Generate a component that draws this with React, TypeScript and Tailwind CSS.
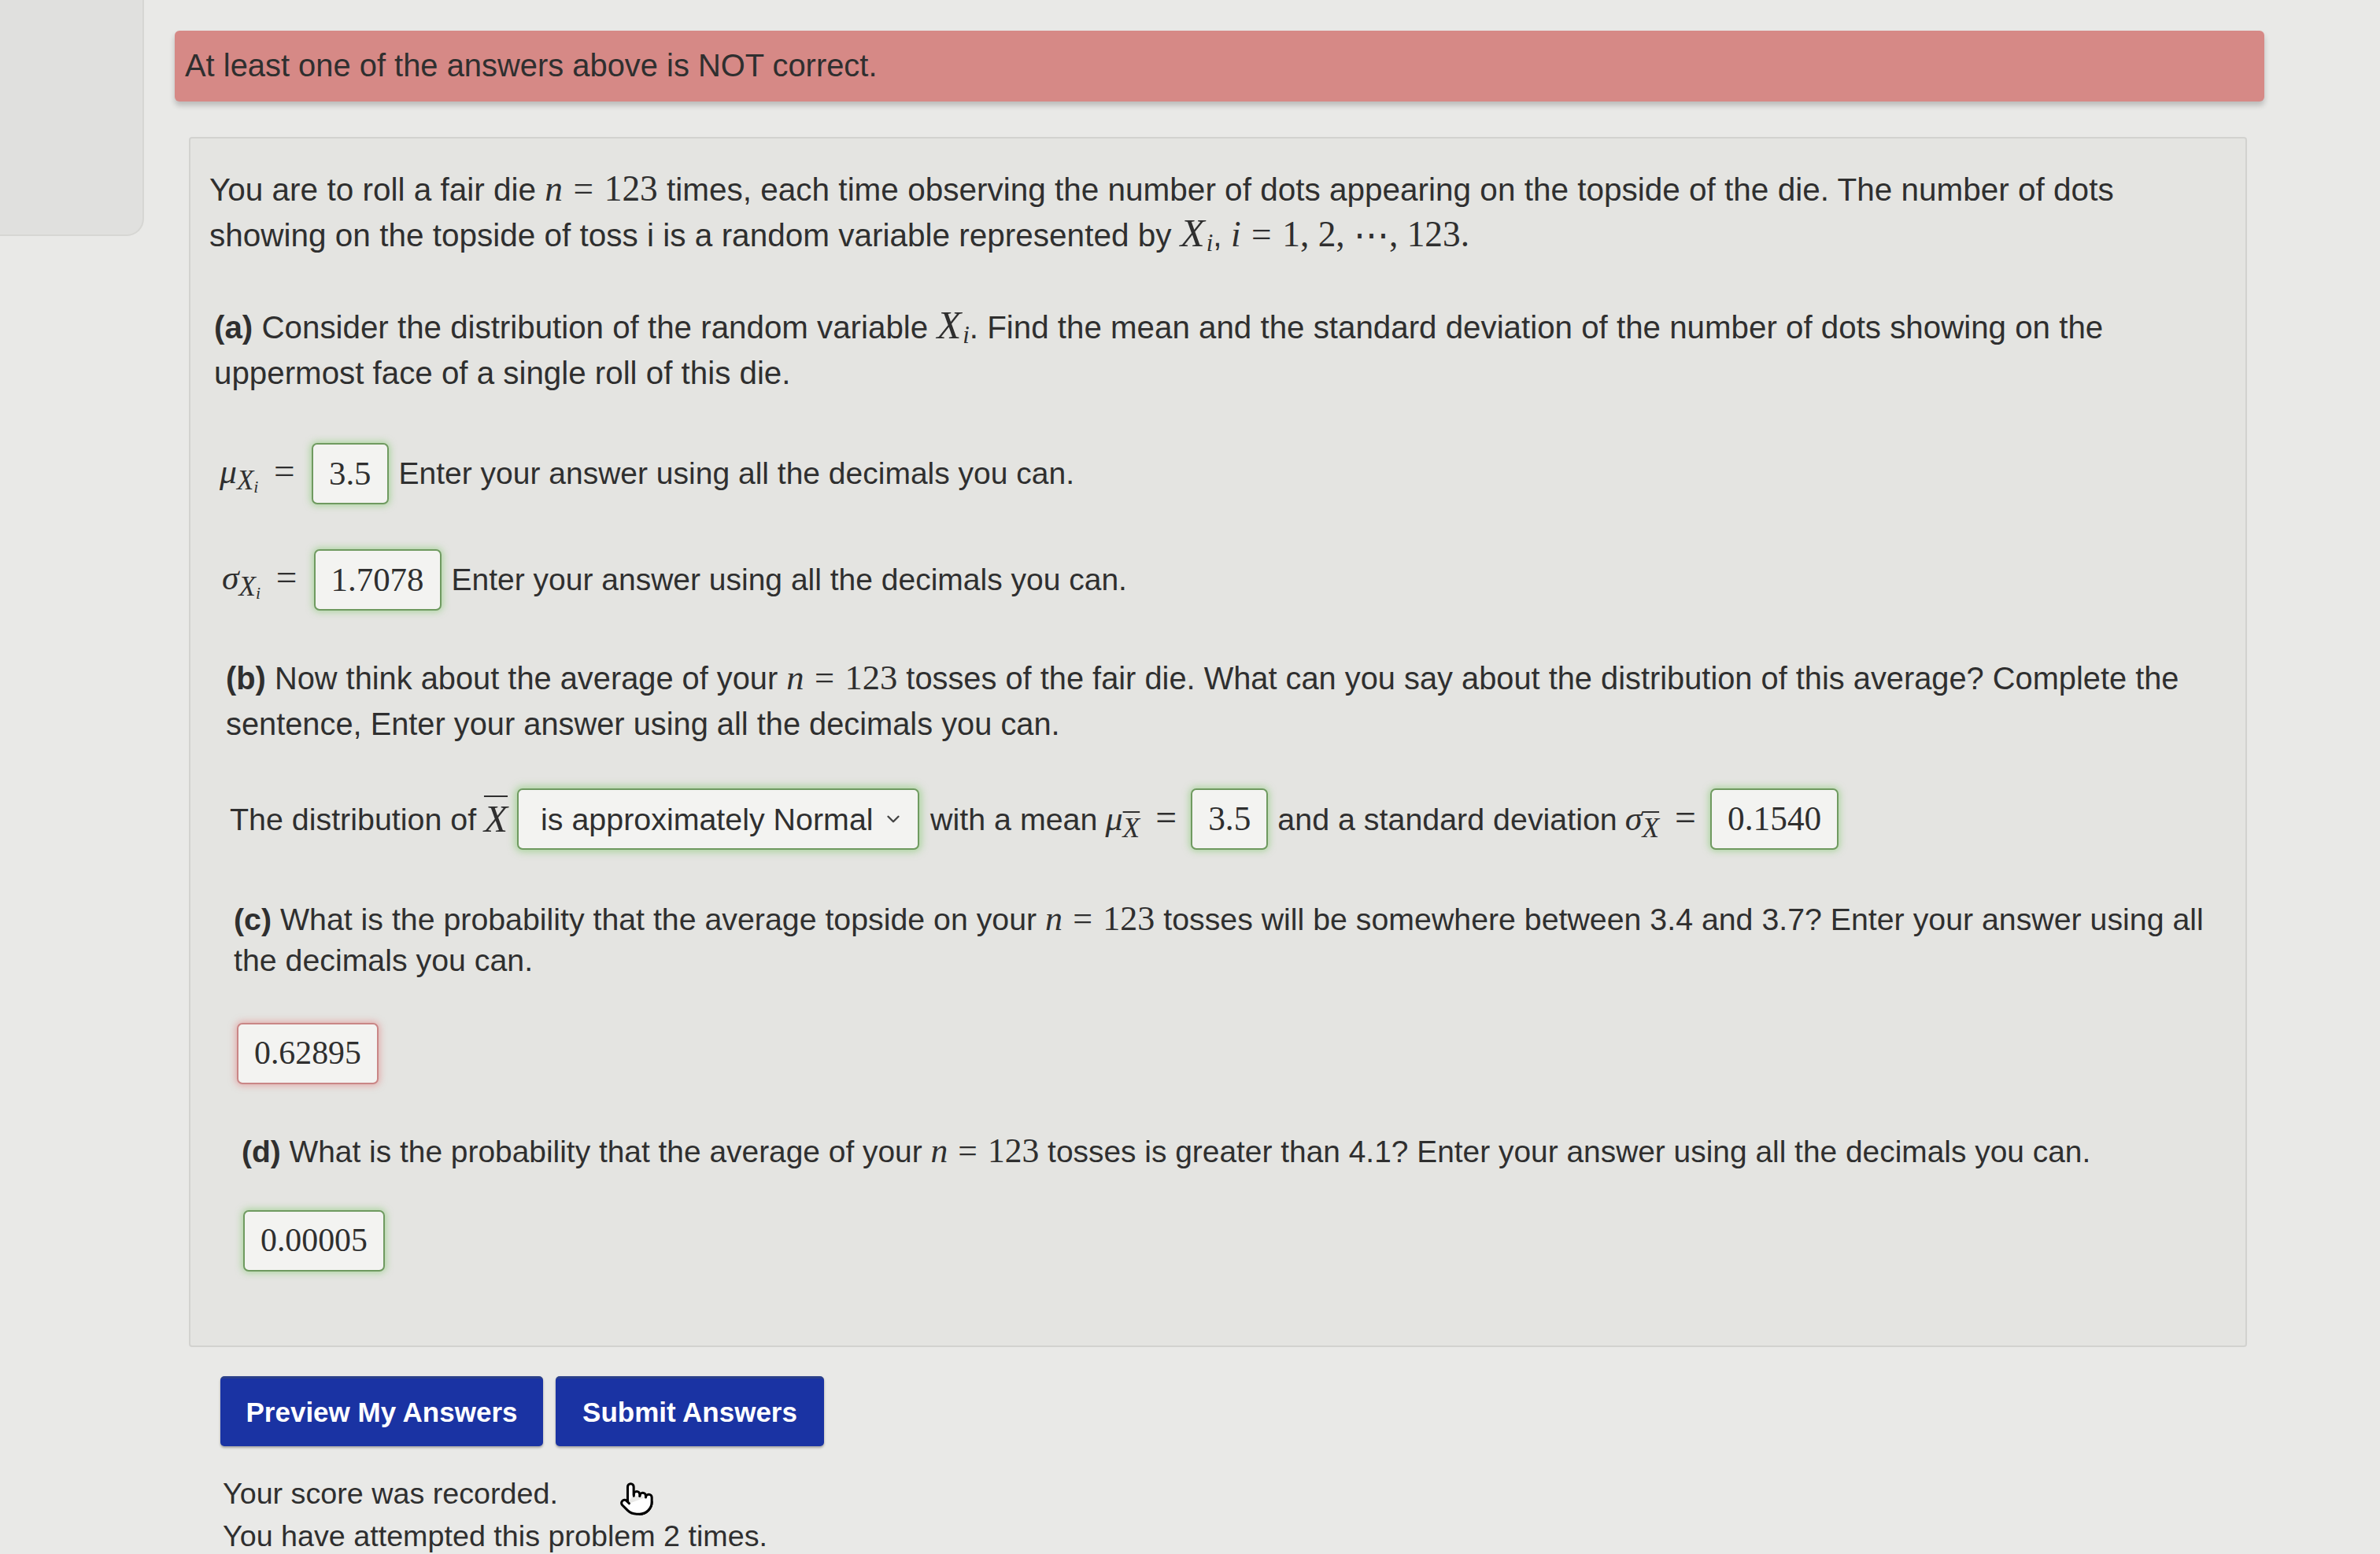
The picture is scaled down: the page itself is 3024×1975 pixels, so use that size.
import { ChevronDown, Pointer } from "lucide-react"
import type { ReactNode } from "react"

// math bits, MathJax-ish look with a serif face; sized relative to the line around it
const math = "font-['Liberation_Serif','DejaVu_Serif',serif] text-[1.12em] leading-[0]"

const Eq = () => <span className="mx-[0.3em]">=</span>

const N123 = () => (
    <span className={`${math} whitespace-nowrap`}>
        <i>n</i>
        <Eq />
        123
    </span>
)

const Xi = () => (
    <span className={`${math} whitespace-nowrap`}>
        <i className="text-[1.12em] pr-[0.04em]">X</i>
        <span className="relative top-[0.2em] text-[0.68em] italic">i</span>
    </span>
)

const SymXi = ({ sym }: { sym: string }) => (
    <span className={`${math} whitespace-nowrap`}>
        <i>{sym}</i>
        <span className="relative top-[0.24em] text-[0.8em] italic">
            X<span className="relative top-[0.18em] text-[0.62em]">i</span>
        </span>
        <span className="ml-[0.42em] mr-[0.45em] text-[1.08em]">=</span>
    </span>
)

const SymXbar = ({ sym }: { sym: string }) => (
    <span className={`${math} whitespace-nowrap`}>
        <i>{sym}</i>
        <span className="relative top-[0.27em] text-[0.8em] italic overline decoration-[2px]">X</span>
        <span className="ml-[0.42em] mr-[0.38em] text-[1.08em]">=</span>
    </span>
)

const AnswerBox = ({ value, wrong = false }: { value: string; wrong?: boolean }) => (
    <span
        className={`inline-flex items-center h-[78px] px-[20px] rounded-[7px] border-2 bg-[#f3f3f1] font-['Liberation_Serif','DejaVu_Serif',serif] text-[1.1em] leading-none ${
            wrong
                ? "border-[#c98686] shadow-[0_0_9px_2px_rgba(225,130,130,0.55)]"
                : "border-[#6f9a60] shadow-[0_0_9px_2px_rgba(130,200,110,0.55)]"
        }`}
    >
        {value}
    </span>
)

const Part = ({ label, children, className = "" }: { label: string; children: ReactNode; className?: string }) => (
    <p className={`whitespace-nowrap ${className}`}>
        <b>({label})</b> {children}
    </p>
)

const hint = "Enter your answer using all the decimals you can."

const ProblemBox = () => (
    <section className="mt-[45px] ml-[18px] w-[2615px] h-[1538px] bg-[#e4e4e1] border-2 border-[#d2d2cf] rounded-[4px] pl-[24px] pt-[36px] leading-[58px]">
        {/* intro */}
        <p className="whitespace-nowrap text-[40.5px]">
            You are to roll a fair die <N123 /> times, each time observing the number of dots appearing on the topside of the die. The number of dots
            <br />
            showing on the topside of toss i is a random variable represented by <Xi />,{" "}
            <span className={math}>
                <i>i</i>
                <Eq />
                1, 2, ⋯, 123.
            </span>
        </p>

        {/* (a) */}
        <Part label="a" className="mt-[60px] ml-[6px] text-[40.3px]">
            Consider the distribution of the random variable <Xi />. Find the mean and the standard deviation of the number of dots showing on the
            <br />
            uppermost face of a single roll of this die.
        </Part>

        <div className="mt-[58px] ml-[13px] h-[80px] flex items-center text-[39px]">
            <SymXi sym="μ" />
            <AnswerBox value="3.5" />
            <span className="ml-[13px]">{hint}</span>
        </div>

        <div className="mt-[55px] ml-[16px] h-[80px] flex items-center text-[39px]">
            <SymXi sym="σ" />
            <AnswerBox value="1.7078" />
            <span className="ml-[13px]">{hint}</span>
        </div>

        {/* (b) */}
        <Part label="b" className="mt-[56px] ml-[21px] text-[39.8px]">
            Now think about the average of your <N123 /> tosses of the fair die. What can you say about the distribution of this average? Complete the
            <br />
            sentence, Enter your answer using all the decimals you can.
        </Part>

        <div className="mt-[53px] ml-[26px] h-[78px] flex items-center whitespace-nowrap text-[39.4px]">
            <span>The distribution of</span>
            <span className={`${math} ml-[0.2em] text-[1.25em] italic overline decoration-[2px]`}>X</span>
            <span className="ml-[12px] inline-flex items-center justify-between w-[511px] h-[78px] pl-[28px] pr-[18px] rounded-[7px] border-2 border-[#6f9a60] bg-[#f3f3f1] shadow-[0_0_10px_3px_rgba(130,200,110,0.55)]">
                is approximately Normal
                <ChevronDown size={26} strokeWidth={2.2} className="text-[#444]" />
            </span>
            <span className="ml-[14px] mr-[10px]">with a mean</span>
            <SymXbar sym="μ" />
            <AnswerBox value="3.5" />
            <span className="ml-[12px] mr-[10px]">and a standard deviation</span>
            <SymXbar sym="σ" />
            <AnswerBox value="0.1540" />
        </div>

        {/* (c) */}
        <Part label="c" className="mt-[62px] ml-[31px] leading-[52px] text-[39.3px]">
            What is the probability that the average topside on your <N123 /> tosses will be somewhere between 3.4 and 3.7? Enter your answer using all
            <br />
            the decimals you can.
        </Part>

        <div className="mt-[54px] ml-[35px] text-[38px]">
            <AnswerBox value="0.62895" wrong />
        </div>

        {/* (d) */}
        <Part label="d" className="mt-[57px] ml-[41px] text-[38.9px]">
            What is the probability that the average of your <N123 /> tosses is greater than 4.1? {hint}
        </Part>

        <div className="mt-[45px] ml-[43px] text-[38px]">
            <AnswerBox value="0.00005" />
        </div>
    </section>
)

export default function App() {
    return (
        <div className="relative w-[3024px] h-[1975px] overflow-hidden bg-[#e9e9e7] text-[#2f2f2f] font-['Liberation_Sans',Arial,sans-serif] text-[37px]">
            <div className="flex">
                {/* sidebar edge */}
                <aside className="w-[183px] shrink-0">
                    <div className="h-[300px] rounded-br-[22px] bg-[#e0e0de] border-r-2 border-b-2 border-[#d6d6d3]" />
                </aside>

                <main className="w-[2655px] ml-[39px] pt-[39px]">
                    <div className="h-[90px] rounded-[6px] bg-[#d68986] pl-[13px] flex items-center text-[39.9px] shadow-[0_5px_7px_rgba(0,0,0,0.2)]">
                        At least one of the answers above is NOT correct.
                    </div>

                    <ProblemBox />

                    <div className="mt-[37px] ml-[58px] flex gap-[16px] text-[35px]">
                        <button className="w-[410px] h-[89px] rounded-[5px] bg-[#1a33a3] text-white font-bold border-t-[3px] border-[#2a3f8a] shadow-[0_2px_3px_rgba(0,0,0,0.3)]">
                            Preview My Answers
                        </button>
                        <button className="w-[341px] h-[89px] rounded-[5px] bg-[#1a33a3] text-white font-bold border-t-[3px] border-[#2a3f8a] shadow-[0_2px_3px_rgba(0,0,0,0.3)]">
                            Submit Answers
                        </button>
                    </div>

                    <div className="mt-[33px] ml-[61px] leading-[54px] text-[37.7px]">
                        <p>Your score was recorded.</p>
                        <p>You have attempted this problem 2 times.</p>
                    </div>
                </main>
            </div>

            {/* mouse cursor */}
            <Pointer size={46} strokeWidth={1.6} className="absolute left-[786px] top-[1882px] text-black fill-white" />
        </div>
    )
}
